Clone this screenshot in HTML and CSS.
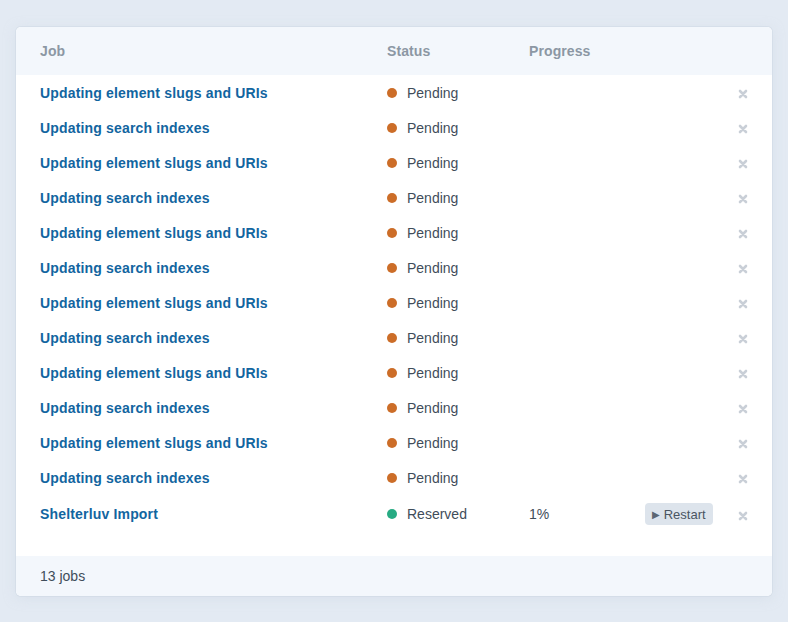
FILE: index.html
```html
<!DOCTYPE html>
<html lang="en">
<head>
<meta charset="utf-8">
<title>Queue Manager</title>
<link rel="stylesheet" href="styles.css">
</head>
<body>
<div class="card">
  <div class="row head">
    <div>Job</div><div>Status</div><div>Progress</div><div></div><div></div>
  </div>
  <div class="rows">
    <div class="row"><a class="job">Updating element slugs and URIs</a><div class="status"><span class="dot pending"></span>Pending</div><div></div><div></div><svg class="x" viewBox="0 0 10 10"><path d="M2 2L8 8M8 2L2 8"/></svg></div>
    <div class="row"><a class="job">Updating search indexes</a><div class="status"><span class="dot pending"></span>Pending</div><div></div><div></div><svg class="x" viewBox="0 0 10 10"><path d="M2 2L8 8M8 2L2 8"/></svg></div>
    <div class="row"><a class="job">Updating element slugs and URIs</a><div class="status"><span class="dot pending"></span>Pending</div><div></div><div></div><svg class="x" viewBox="0 0 10 10"><path d="M2 2L8 8M8 2L2 8"/></svg></div>
    <div class="row"><a class="job">Updating search indexes</a><div class="status"><span class="dot pending"></span>Pending</div><div></div><div></div><svg class="x" viewBox="0 0 10 10"><path d="M2 2L8 8M8 2L2 8"/></svg></div>
    <div class="row"><a class="job">Updating element slugs and URIs</a><div class="status"><span class="dot pending"></span>Pending</div><div></div><div></div><svg class="x" viewBox="0 0 10 10"><path d="M2 2L8 8M8 2L2 8"/></svg></div>
    <div class="row"><a class="job">Updating search indexes</a><div class="status"><span class="dot pending"></span>Pending</div><div></div><div></div><svg class="x" viewBox="0 0 10 10"><path d="M2 2L8 8M8 2L2 8"/></svg></div>
    <div class="row"><a class="job">Updating element slugs and URIs</a><div class="status"><span class="dot pending"></span>Pending</div><div></div><div></div><svg class="x" viewBox="0 0 10 10"><path d="M2 2L8 8M8 2L2 8"/></svg></div>
    <div class="row"><a class="job">Updating search indexes</a><div class="status"><span class="dot pending"></span>Pending</div><div></div><div></div><svg class="x" viewBox="0 0 10 10"><path d="M2 2L8 8M8 2L2 8"/></svg></div>
    <div class="row"><a class="job">Updating element slugs and URIs</a><div class="status"><span class="dot pending"></span>Pending</div><div></div><div></div><svg class="x" viewBox="0 0 10 10"><path d="M2 2L8 8M8 2L2 8"/></svg></div>
    <div class="row"><a class="job">Updating search indexes</a><div class="status"><span class="dot pending"></span>Pending</div><div></div><div></div><svg class="x" viewBox="0 0 10 10"><path d="M2 2L8 8M8 2L2 8"/></svg></div>
    <div class="row"><a class="job">Updating element slugs and URIs</a><div class="status"><span class="dot pending"></span>Pending</div><div></div><div></div><svg class="x" viewBox="0 0 10 10"><path d="M2 2L8 8M8 2L2 8"/></svg></div>
    <div class="row"><a class="job">Updating search indexes</a><div class="status"><span class="dot pending"></span>Pending</div><div></div><div></div><svg class="x" viewBox="0 0 10 10"><path d="M2 2L8 8M8 2L2 8"/></svg></div>
    <div class="row tall"><a class="job">Shelterluv Import</a><div class="status"><span class="dot reserved"></span>Reserved</div><div class="progress">1%</div><div><button class="btn"><span class="play">&#x25B6;</span>Restart</button></div><svg class="x" viewBox="0 0 10 10"><path d="M2 2L8 8M8 2L2 8"/></svg></div>
  </div>
  <div class="footer">13 jobs</div>
</div>
</body>
</html>
```

FILE: styles.css
```css
* { box-sizing: border-box; }
html, body { margin: 0; padding: 0; }
body {
  background: #e3eaf3;
  font-family: "Liberation Sans", Arial, sans-serif;
  font-size: 14px;
  color: #3f4d5a;
  padding: 27px 16px 26px 16px;
}
.card {
  background: #fff;
  border-radius: 5px;
  box-shadow: 0 0 0 1px rgba(205, 216, 228, 0.5), 0 2px 12px rgba(205, 216, 228, 0.5);
  overflow: hidden;
}
.row {
  display: grid;
  grid-template-columns: 347px 142px 116px 93px 10px;
  align-items: center;
  padding: 0 24px;
  height: 35px;
}
.row.head {
  height: 48px;
  background: #f3f7fc;
  color: #8c97a4;
  font-weight: bold;
  font-size: 14px;
  letter-spacing: 0.1px;
}
.row.tall { height: 38px; }
.rows { padding-bottom: 23px; }
.job {
  color: #1265a0;
  font-weight: bold;
  text-decoration: none;
  letter-spacing: 0.17px;
}
.status { display: flex; align-items: center; }
.dot {
  width: 10px;
  height: 10px;
  border-radius: 50%;
  margin-right: 10px;
  flex: none;
}
.dot.pending { background: #cc6d28; }
.dot.reserved { background: #27ab83; }
.x {
  width: 10px;
  height: 10px;
  margin-top: 3px;
  stroke: #c9cfd7;
  stroke-width: 2.6;
  stroke-linecap: round;
  fill: none;
}
.btn {
  display: inline-flex;
  align-items: center;
  height: 22px;
  width: 68px;
  padding: 0 0 0 7px;
  border: 0;
  border-radius: 4px;
  background: #dde4ec;
  color: #4a5562;
  font-family: "Liberation Sans", Arial, sans-serif;
  font-size: 13px;
}
.play {
  font-size: 10px;
  margin-right: 4px;
  color: #5b6673;
  font-family: "DejaVu Sans", sans-serif;
}
.footer {
  height: 40px;
  background: #f3f7fc;
  display: flex;
  align-items: center;
  padding: 0 24px;
}
```
